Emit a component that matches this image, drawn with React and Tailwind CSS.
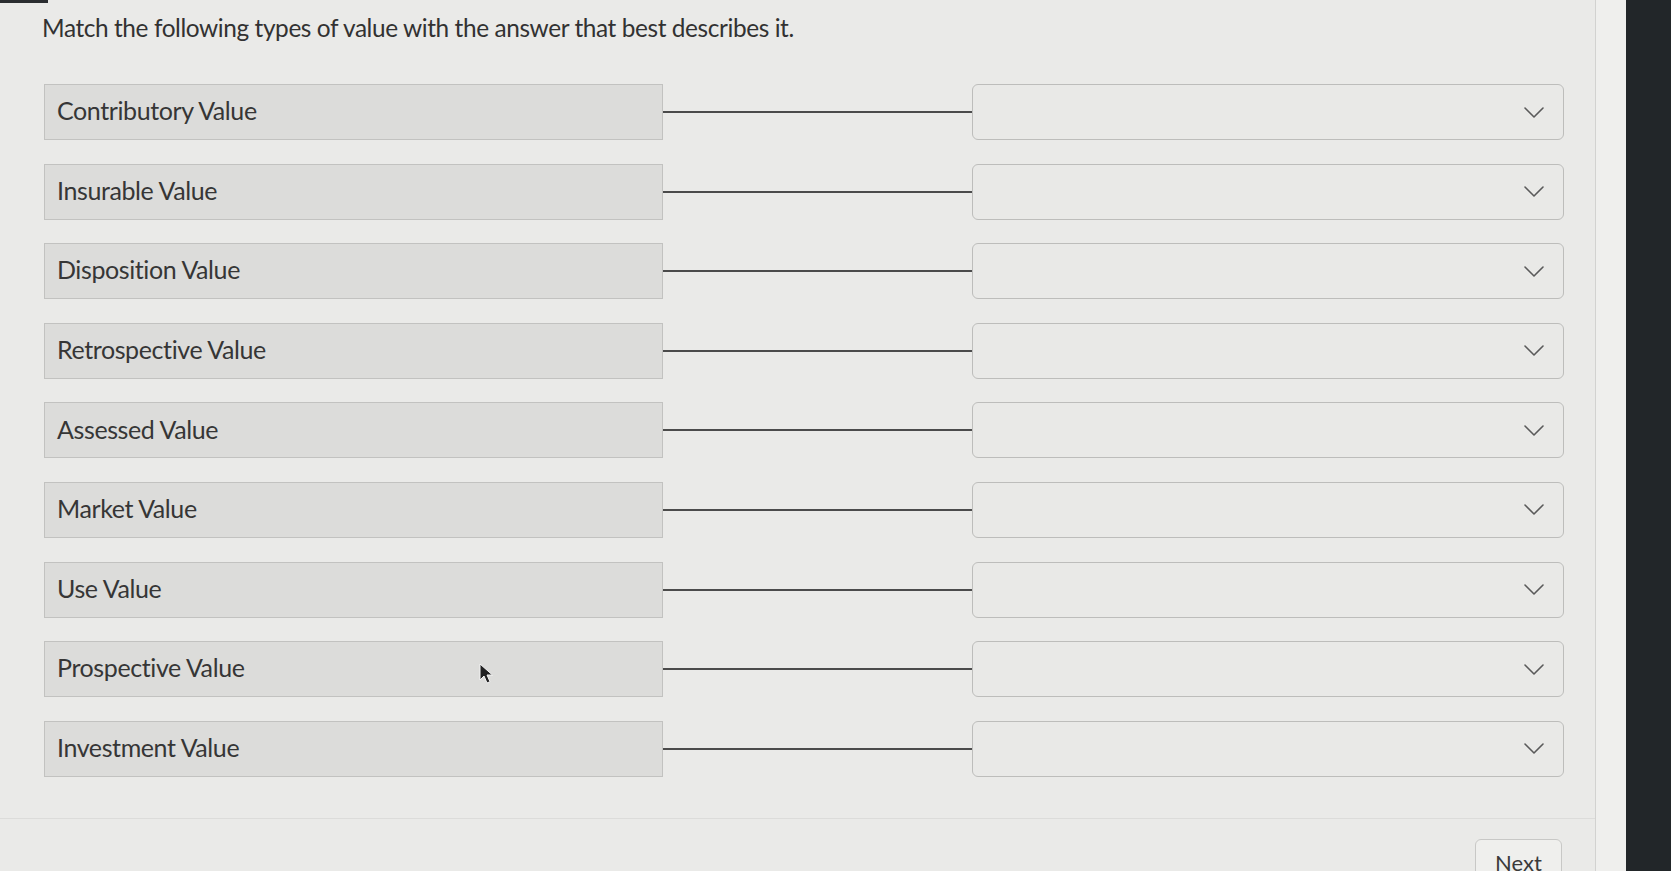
import React from 'react';

const TYPES = [
  'Contributory Value',
  'Insurable Value',
  'Disposition Value',
  'Retrospective Value',
  'Assessed Value',
  'Market Value',
  'Use Value',
  'Prospective Value',
  'Investment Value',
];

function Chevron() {
  return (
    <svg width="20" height="11" viewBox="0 0 20 11" fill="none" className="text-[#5a5a5a]">
      <path d="M1 1l9 9 9-9" stroke="currentColor" strokeWidth="1.6" strokeLinecap="round" strokeLinejoin="round" />
    </svg>
  );
}

function MatchRow({ label }) {
  return (
    <div className="flex items-center h-[56px]">
      <div className="w-[619px] h-full flex items-center pl-[12px] pb-[2px] bg-[#dcdcda] border border-[#c2c2c0] text-[25px] text-[#363636] tracking-[-0.4px]">
        {label}
      </div>
      <div className="w-[309px] h-[2px] bg-[#4b4b4b]" />
      <button className="w-[592px] h-full flex items-center justify-end pr-[19px] bg-[#e9e9e7] border border-[#bdbdbb] rounded-md">
        <Chevron />
      </button>
    </div>
  );
}

export default function App() {
  return (
    <div className="w-[1671px] h-[871px] overflow-hidden flex bg-[#e9e9e7] font-['Lato','Liberation_Sans',sans-serif]">
      <div className="relative w-[1596px] shrink-0 border-r border-[#d2d2d0] bg-[#eaeae8]">
        <div className="absolute left-0 top-0 w-[48px] h-[3px] bg-[#2a2d30]" />
        <h1 className="pl-[42px] pt-[12px] text-[24.4px] leading-[32px] text-[#323232] tracking-[-0.4px]">
          Match the following types of value with the answer that best describes it.
        </h1>
        <div className="pl-[44px] pt-[40px] flex flex-col gap-[23.6px]">
          {TYPES.map((t) => (
            <MatchRow key={t} label={t} />
          ))}
        </div>
        <div className="mt-[41px] border-t border-[#dcdcda]" />
        <div className="flex justify-end pr-[33px] pt-[20px]">
          <button className="w-[87px] h-[48px] bg-[#efefed] border border-[#c8c8c6] rounded-md text-[22px] text-[#3a3a3a] pt-[8px] leading-[30px] flex justify-center">
            Next
          </button>
        </div>
        {/* mouse pointer */}
        <svg className="absolute left-[479px] top-[663px]" width="14" height="22" viewBox="0 0 14 22">
          <path d="M1 1v16l4-4 3 7 3-1.3-3-6.7h5.5z" fill="#222" stroke="#f4f4f4" strokeWidth="1" />
        </svg>
      </div>
      <div className="w-[30px] shrink-0 bg-[#efefed]" />
      <div className="flex-1 bg-[#222629]" />
    </div>
  );
}
